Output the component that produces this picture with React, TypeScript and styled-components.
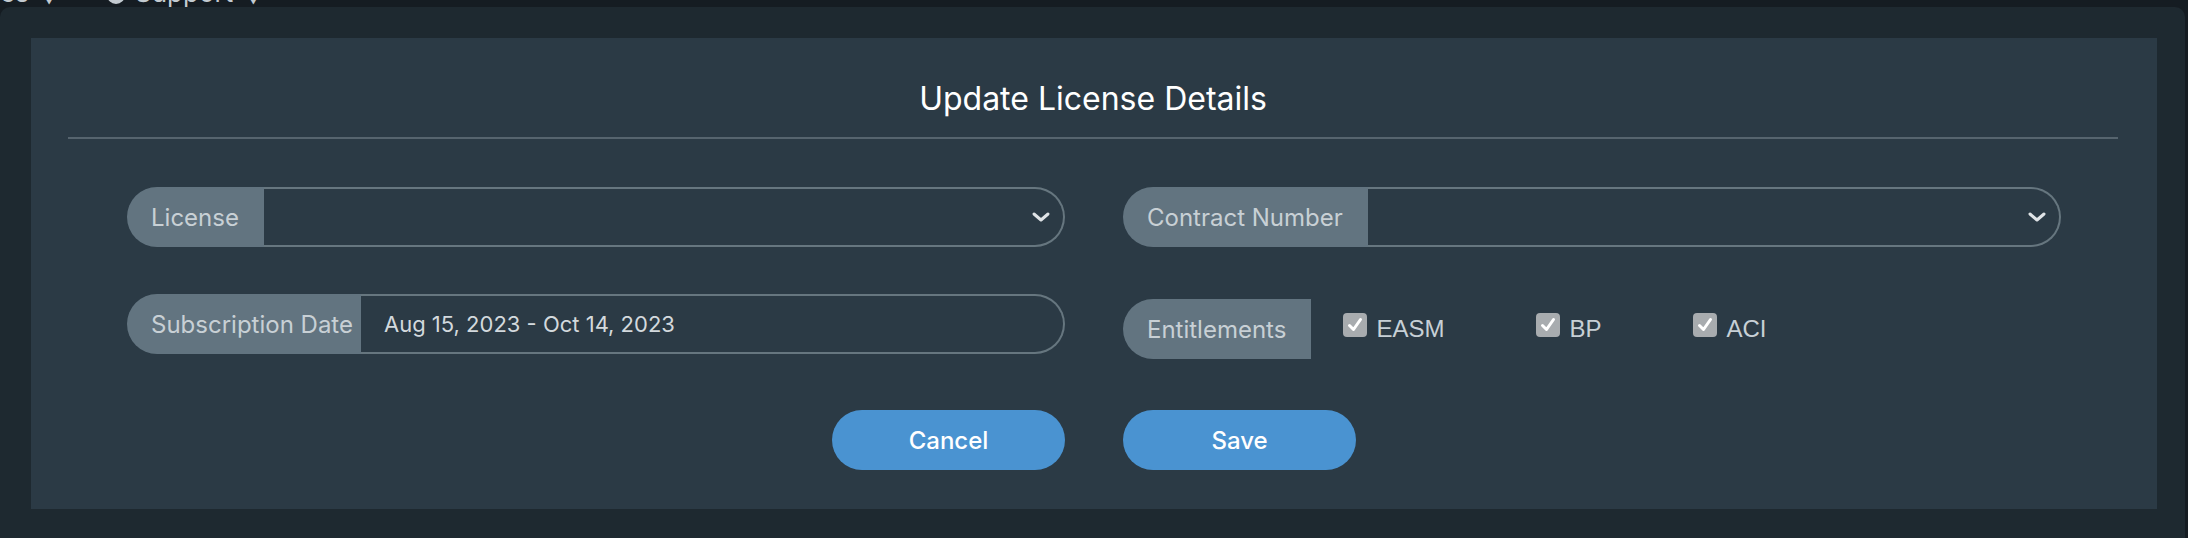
import styled, { createGlobalStyle } from "styled-components";

const GlobalStyle = createGlobalStyle`
    html, body {
        margin: 0;
        padding: 0;
        background: #151c22;
        font-family: "Inter", "Noto Sans", sans-serif;
    }
    * {
        box-sizing: border-box;
    }
`

const Page = styled.div`
    display: flex;
    flex-direction: column;
    height: 100vh;
`

const TopNav = styled.nav`
    height: 7px;
    display: flex;
    align-items: flex-end;
    gap: 48px;
    overflow: hidden;
    color: #c3cad0;
    font-size: 26px;
    line-height: 1;
`

const NavItem = styled.div`
    display: flex;
    align-items: flex-end;
    gap: 8px;
    padding-bottom: 1px;
    white-space: nowrap;

    .caret {
        font-size: 16px;
        margin-left: 4px;
    }
`

const Shell = styled.main`
    flex: 1;
    margin-right: 3px;
    padding: 31px 28px 0 31px;
    background: #1e2930;
    border-radius: 10px 10px 0 0;
`

const Panel = styled.section`
    background: #2b3a45;
`

const Header = styled.h2`
    margin: 0 39px 0 37px;
    padding: 43px 0 20px;
    border-bottom: 2px solid #56646e;
    text-align: center;
    color: #ffffff;
    font-size: 32px;
    font-weight: 400;
    line-height: 36px;
`

const Body = styled.div`
    padding: 48px 96px 39px;
`

const FormGrid = styled.div`
    display: grid;
    grid-template-columns: 1fr 1fr;
    column-gap: 58px;
    row-gap: 47px;
`

const FieldGroup = styled.div`
    display: flex;
    height: 60px;
`

const FieldLabel = styled.span<{ $tight?: boolean }>`
    display: flex;
    align-items: center;
    padding: 0 ${props => props.$tight ? "8px" : "25px"} 0 24px;
    background: #627480;
    color: #c8d0d5;
    border-radius: 30px 0 0 30px;
    font-size: 24px;
    white-space: nowrap;
`

const Field = styled.div`
    flex: 1;
    display: flex;
    align-items: center;
    justify-content: space-between;
    padding: 0 12px 0 23px;
    border: 2px solid #66767f;
    border-left: none;
    border-radius: 0 30px 30px 0;
    color: #d3d9dd;
    font-size: 22px;
`

const EntitlementGroup = styled.div`
    display: flex;
    align-items: center;
    height: 60px;
    margin-top: 5px;

    ${FieldLabel} {
        height: 100%;
    }
`

const CheckList = styled.div`
    display: flex;
    gap: 92px;
    margin-left: 32px;
`

const CheckItem = styled.label`
    display: flex;
    align-items: center;
    gap: 9px;
    color: #c7d0d6;
    font-family: "Liberation Sans", Arial, sans-serif;
    font-size: 24px;
`

const CheckBox = styled.span`
    width: 24px;
    height: 24px;
    margin-bottom: 8px;
    display: flex;
    align-items: center;
    justify-content: center;
    background: #a8acaf;
    border-radius: 4px;
`

const ButtonRow = styled.div`
    display: grid;
    grid-template-columns: 1fr 1fr;
    column-gap: 58px;
    margin-top: 51px;
`

const Button = styled.button<{ $side: "start" | "end" }>`
    justify-self: ${props => props.$side};
    width: 233px;
    height: 60px;
    border: none;
    border-radius: 30px;
    background: #4a93d1;
    color: #ffffff;
    font-family: inherit;
    font-size: 24px;
    font-weight: 500;
    cursor: pointer;
`

function Chevron() {
    return (
        <svg width="20" height="12" viewBox="0 0 20 12">
            <polyline points="3,3 10,9 17,3" fill="none" stroke="#dfe3e6" strokeWidth="3" strokeLinecap="round" strokeLinejoin="round" />
        </svg>
    );
}

function Check() {
    return (
        <svg width="18" height="18" viewBox="0 0 18 18">
            <polyline points="3.5,9.5 7.5,13.5 14.5,3.5" fill="none" stroke="#ffffff" strokeWidth="3" strokeLinecap="round" strokeLinejoin="round" />
        </svg>
    );
}

const entitlements = ["EASM", "BP", "ACI"];

export default function App() {
    return (
        <Page>
            <GlobalStyle />
            <TopNav>
                <NavItem>es<span className="caret">▼</span></NavItem>
                <NavItem>
                    <svg width="22" height="22" viewBox="0 0 22 22"><circle cx="11" cy="11" r="9" fill="#c3cad0" /></svg>
                    Support<span className="caret">▼</span>
                </NavItem>
            </TopNav>
            <Shell>
                <Panel>
                    <Header>Update License Details</Header>
                    <Body>
                        <FormGrid>
                            <FieldGroup>
                                <FieldLabel>License</FieldLabel>
                                <Field><span /><Chevron /></Field>
                            </FieldGroup>
                            <FieldGroup>
                                <FieldLabel>Contract Number</FieldLabel>
                                <Field><span /><Chevron /></Field>
                            </FieldGroup>
                            <FieldGroup>
                                <FieldLabel $tight>Subscription Date</FieldLabel>
                                <Field>Aug 15, 2023 - Oct 14, 2023</Field>
                            </FieldGroup>
                            <EntitlementGroup>
                                <FieldLabel>Entitlements</FieldLabel>
                                <CheckList>
                                    {entitlements.map(name => (
                                        <CheckItem key={name}>
                                            <CheckBox><Check /></CheckBox>
                                            {name}
                                        </CheckItem>
                                    ))}
                                </CheckList>
                            </EntitlementGroup>
                        </FormGrid>
                        <ButtonRow>
                            <Button $side="end">Cancel</Button>
                            <Button $side="start">Save</Button>
                        </ButtonRow>
                    </Body>
                </Panel>
            </Shell>
        </Page>
    );
}
